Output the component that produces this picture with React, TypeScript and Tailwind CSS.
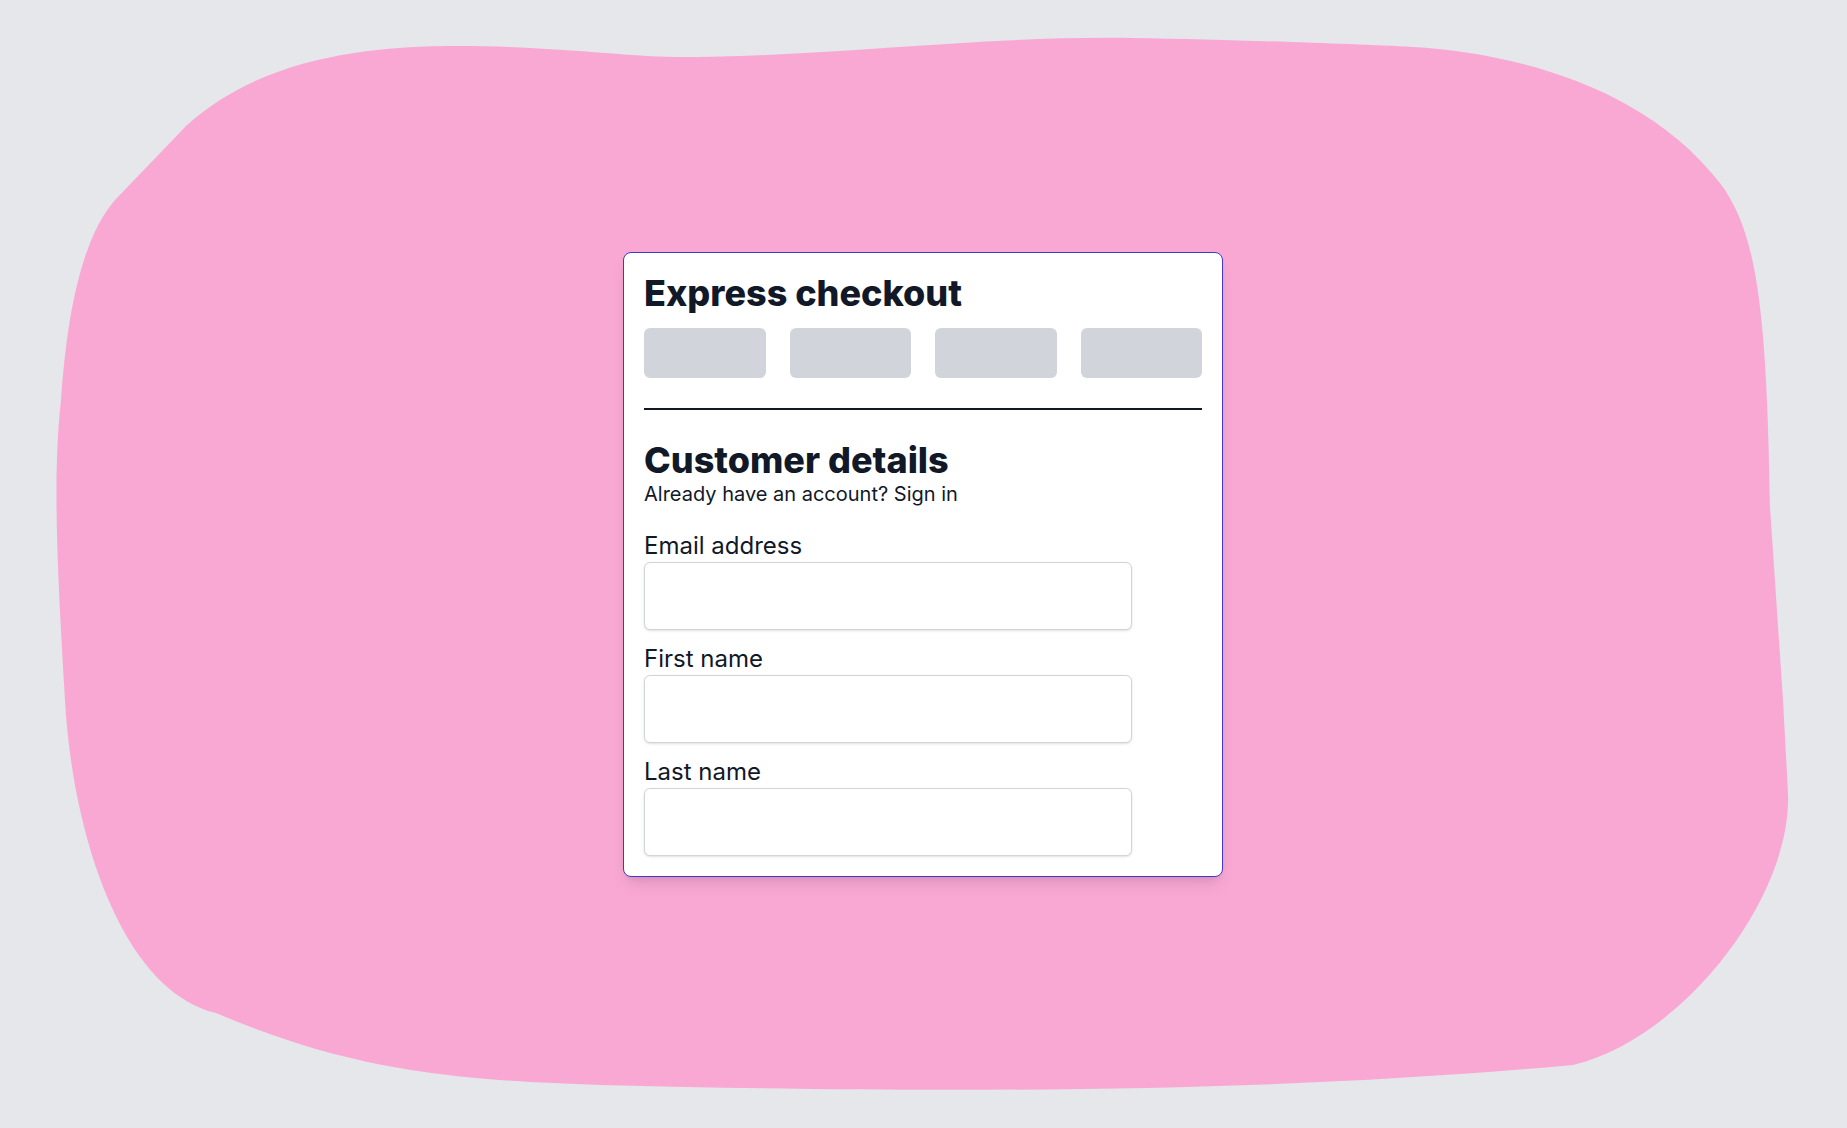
const fields = ['Email address', 'First name', 'Last name']

function Blob() {
  return (
    <svg
      className="absolute inset-0 h-full w-full"
      viewBox="0 0 1847 1128"
      preserveAspectRatio="none"
      aria-hidden="true"
    >
      <path
        fill="#f9a8d4"
        d="M 216 1013
           C 120 990, 72 830, 65 700
           C 58 580, 52 480, 61 400
           C 68 300, 85 235, 115 200
           L 187 125
           C 260 60, 360 46, 459 46
           C 560 46, 630 58, 695 57
           C 850 55, 980 36, 1131 38
           C 1250 40, 1350 44, 1413 47
           C 1500 52, 1640 80, 1720 183
           C 1755 230, 1767 300, 1770 507
           L 1783 700
           L 1788 793
           C 1792 900, 1680 1040, 1573 1065
           C 1300 1090, 1000 1095, 600 1085
           C 450 1080, 350 1070, 216 1013 Z"
      />
    </svg>
  )
}

export default function App() {
  return (
    <div
      className="relative flex h-[1128px] w-full items-center justify-center overflow-hidden bg-[#e5e7eb] text-[#111827]"
      style={{ fontFamily: 'Inter, "Liberation Sans", sans-serif' }}
    >
      <Blob />

      <div className="relative -ml-[1px] w-[600px] rounded-lg border border-[#4338ca] bg-white p-5 shadow-lg">
        <h2 className="text-4xl font-extrabold">Express checkout</h2>
        <div className="mt-[15px] flex gap-6">
          <div className="h-[50px] flex-1 rounded-md bg-[#d1d5db]" />
          <div className="h-[50px] flex-1 rounded-md bg-[#d1d5db]" />
          <div className="h-[50px] flex-1 rounded-md bg-[#d1d5db]" />
          <div className="h-[50px] flex-1 rounded-md bg-[#d1d5db]" />
        </div>

        <hr className="mt-[30px] border-t-2 border-[#111827]" />

        <h2 className="mt-[30px] text-4xl font-extrabold">Customer details</h2>
        <p className="text-xl">Already have an account? Sign in</p>

        <div className="mt-[22px] flex flex-col gap-[13px]">
          {fields.map((label) => (
            <div key={label}>
              <label className="block text-2xl">{label}</label>
              <input
                type="text"
                className="block h-[68px] w-[488px] rounded-md border border-[#d1d5db] bg-white px-3 shadow-sm outline-none"
              />
            </div>
          ))}
        </div>
      </div>
    </div>
  )
}
